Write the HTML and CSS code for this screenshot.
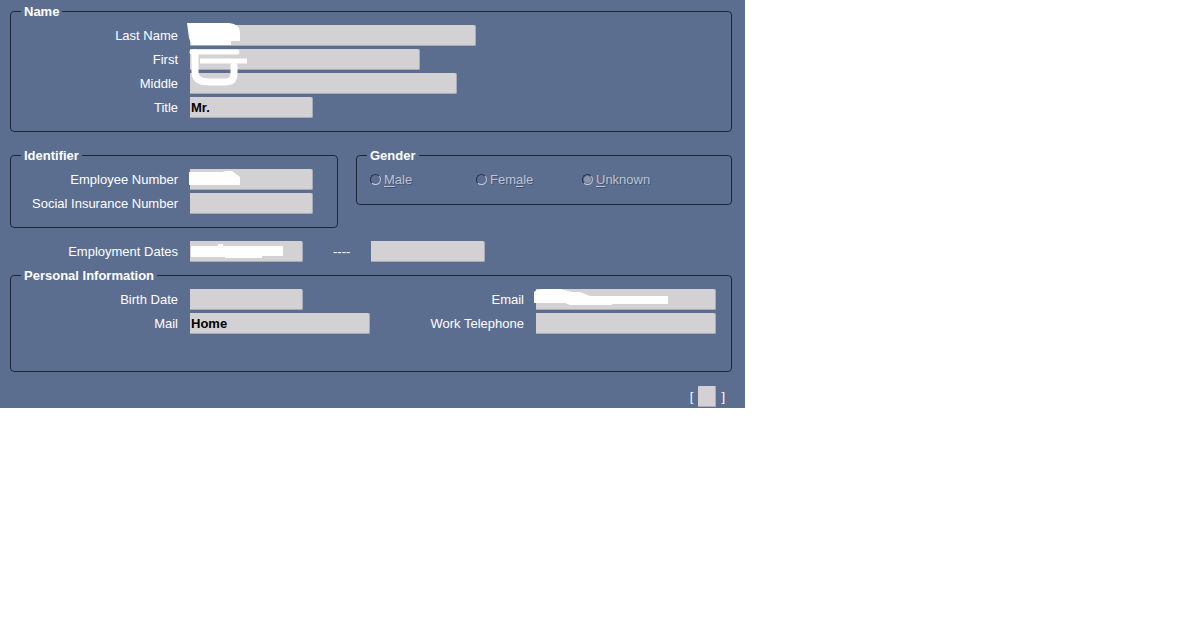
FILE: index.html
```html
<!DOCTYPE html>
<html>
<head>
<meta charset="utf-8">
<title>Employee</title>
<link rel="stylesheet" href="styles.css">
</head>
<body>
<div class="form">
  <fieldset class="group g-name">
    <legend>Name</legend>
    <div class="row"><span class="lbl">Last Name</span><div class="field w287"></div></div>
    <div class="row"><span class="lbl">First</span><div class="field w231"></div></div>
    <div class="row"><span class="lbl">Middle</span><div class="field w268"></div></div>
    <div class="row"><span class="lbl">Title</span><div class="field w124">Mr.</div></div>
  </fieldset>

  <div class="pair">
    <fieldset class="group g-ident">
      <legend>Identifier</legend>
      <div class="row"><span class="lbl">Employee Number</span><div class="field w124"></div></div>
      <div class="row"><span class="lbl">Social Insurance Number</span><div class="field w124"></div></div>
    </fieldset>
    <fieldset class="group g-gender">
      <legend>Gender</legend>
      <div class="radios">
        <div class="radio"><span class="dot"></span><span class="rtext"><u>M</u>ale</span></div>
        <div class="radio"><span class="dot"></span><span class="rtext">Fem<u>a</u>le</span></div>
        <div class="radio"><span class="dot on"></span><span class="rtext"><u>U</u>nknown</span></div>
      </div>
    </fieldset>
  </div>

  <div class="row dates">
    <span class="lbl">Employment Dates</span>
    <div class="field w114"></div>
    <span class="dash">----</span>
    <div class="field w115"></div>
  </div>

  <fieldset class="group g-personal">
    <legend>Personal Information</legend>
    <div class="prow">
      <span class="lbl">Birth Date</span><div class="cell"><div class="field w114"></div></div>
      <span class="lbl2">Email</span><div class="field w181"></div>
    </div>
    <div class="prow">
      <span class="lbl">Mail</span><div class="cell"><div class="field w181">Home</div></div>
      <span class="lbl2">Work Telephone</span><div class="field w181"></div>
    </div>
  </fieldset>

  <div class="footer"><span>[</span><div class="btn"></div><span>]</span></div>

  <svg class="redact" width="745" height="408" viewBox="0 0 745 408" xmlns="http://www.w3.org/2000/svg">
    <path d="M187 23 H229 Q240 24 240 32 V41 H231 V45 H192 L189 38 Z" fill="#fff"/>
    <path d="M192 52 H237" stroke="#fff" stroke-width="5" fill="none" stroke-linecap="round"/>
    <path d="M195 53 V72 Q195 82 209 82 H225 Q234 82 234 74 V66" stroke="#fff" stroke-width="7" fill="none" stroke-linecap="round"/>
    <path d="M200 61 H247" stroke="#fff" stroke-width="5" fill="none"/>
    <path d="M189 172 H222 L226 171 H232 L240 177 V185 H189 Z" fill="#fff"/>
    <path d="M191 246 H218 V244 H223 V246 H283 V256 H262 V258 H225 V257 H191 Z" fill="#fff"/>
    <path d="M534 292 Q536 289 546 289 H560 L572 292 H580 L590 296 H668 V304 H612 V305 H570 L565 303 H534 Z" fill="#fff"/>
  </svg>
</div>
</body>
</html>
```

FILE: styles.css
```css
html, body {
  margin: 0;
  padding: 0;
  background: #ffffff;
}

body {
  font-family: "Liberation Sans", Arial, sans-serif;
  font-size: 13px;
  color: #ffffff;
}

.form {
  position: relative;
  width: 745px;
  height: 408px;
  background: #5c6e8f;
  box-sizing: border-box;
  padding-top: 4px;
  overflow: hidden;
}

.group {
  margin: 0 0 0 10px;
  padding: 6px 0 13px 0;
  border: 1px solid #1d2738;
  border-radius: 4px;
  box-sizing: border-box;
  min-inline-size: 0;
}

.group legend {
  margin-left: 10px;
  padding: 0 3px;
  font-weight: bold;
  font-size: 13px;
  line-height: 15px;
  color: #ffffff;
}

.g-name { width: 722px; }

.row {
  display: flex;
  align-items: center;
  height: 21px;
  margin-bottom: 3px;
}

.row:last-child { margin-bottom: 0; }

.lbl {
  width: 167px;
  margin-right: 12px;
  text-align: right;
  line-height: 21px;
  white-space: nowrap;
}

.field {
  height: 21px;
  box-sizing: border-box;
  background: #d3d1d3;
  border-right: 1px solid #a7acb6;
  border-bottom: 1px solid #a7acb6;
  border-radius: 0 2px 2px 1px;
  color: #000000;
  font-weight: bold;
  line-height: 21px;
  padding-left: 1px;
}

.w287 { width: 286px; }
.w268 { width: 267px; }
.w231 { width: 230px; }
.w124 { width: 123px; }
.w114 { width: 113px; }
.w115 { width: 114px; }
.w181 { width: 180px; }

.pair {
  display: flex;
  align-items: flex-start;
  gap: 18px;
  margin-top: 16px;
  margin-left: 10px;
}

.pair .group { margin-left: 0; }

.g-ident { width: 328px; }

.g-gender {
  width: 376px;
  padding-bottom: 14px;
}

.radios {
  display: flex;
  height: 21px;
  align-items: center;
  padding-left: 13px;
}

.radio {
  display: flex;
  align-items: center;
  width: 106px;
  gap: 3px;
}

.dot {
  width: 11px;
  height: 11px;
  box-sizing: border-box;
  border-radius: 50%;
  border: 1px solid;
  border-color: #2a3346 #b8c0d0 #c8cedb #2a3346;
  position: relative;
}

.dot.on::after {
  content: "";
  position: absolute;
  left: 1px;
  top: 1px;
  width: 7px;
  height: 7px;
  border-radius: 50%;
  background: #8b93a8;
}

.rtext {
  color: #bcc3d2;
  text-shadow: 1px 1px 0 rgba(40, 50, 72, 0.45);
}

.rtext u { text-decoration-thickness: 1px; text-underline-offset: 2px; }

.dates {
  margin-top: 13px;
  padding-left: 11px;
}

.dash {
  width: 38px;
  margin-left: 30px;
  line-height: 21px;
}

.g-personal {
  width: 722px;
  margin-top: 6px;
  padding-bottom: 37px;
}

.prow {
  display: grid;
  grid-template-columns: 167px 190px 132px 181px;
  column-gap: 12px;
  height: 21px;
  align-items: center;
  margin-bottom: 3px;
}

.prow:last-child { margin-bottom: 0; }

.prow .lbl { width: auto; margin-right: 0; }

.lbl2 {
  text-align: right;
  line-height: 21px;
  white-space: nowrap;
}

.footer {
  display: flex;
  justify-content: flex-end;
  align-items: center;
  gap: 5px;
  margin-top: 14px;
  padding-right: 20px;
  height: 21px;
}

.btn {
  width: 18px;
  height: 21px;
  box-sizing: border-box;
  background: #d3d1d3;
  border-right: 1px solid #a7acb6;
  border-bottom: 1px solid #a7acb6;
  border-radius: 1px;
}

.redact {
  position: absolute;
  left: 0;
  top: 0;
  pointer-events: none;
}
```
